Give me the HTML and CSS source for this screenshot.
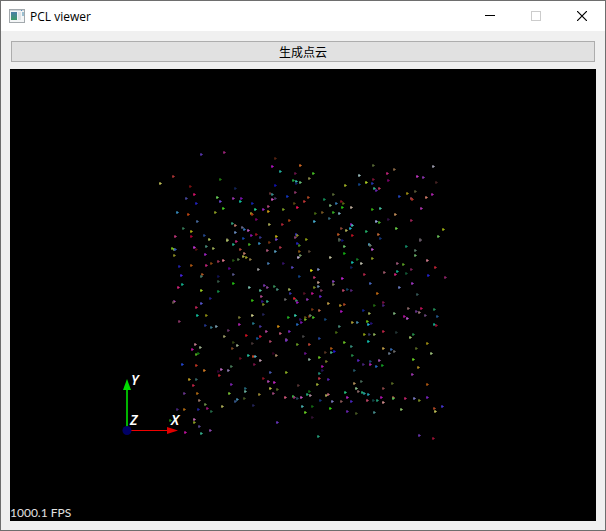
FILE: index.html
```html
<!DOCTYPE html>
<html lang="zh-CN">
<head>
  <meta charset="UTF-8">
  <meta name="viewport" content="width=device-width, initial-scale=1.0">
  <title>PCL viewer</title>
  <link rel="stylesheet" href="styles.css">
</head>
<body>
  <div class="window">
    <!-- Title bar -->
    <header class="titlebar">
      <svg class="appIcon" width="16" height="14" viewBox="0 0 16 14">
        <defs>
          <linearGradient id="paneFill" x1="0" y1="0" x2="0" y2="1">
            <stop offset="0" stop-color="#4b7fa8"/>
            <stop offset="1" stop-color="#3d9a68"/>
          </linearGradient>
        </defs>
        <rect x="0.5" y="0.5" width="15" height="13" fill="#f4f6f7" stroke="#a3a9ad"/>
        <rect x="1" y="1" width="14" height="1" fill="#cfd6da"/>
        <rect x="2" y="3" width="6" height="8" fill="url(#paneFill)"/>
        <rect x="9" y="3" width="3" height="8" fill="#dfe3e6"/>
        <rect x="13" y="3" width="2" height="4" fill="#9bbfd0"/>
        <rect x="12" y="1" width="1" height="1" fill="#5a8fc0"/>
      </svg>
      <h1 class="title">PCL viewer</h1>
      <button class="control" aria-label="Minimize">
        <svg width="10" height="10" viewBox="0 0 10 10"><path d="M0 4.5h10" stroke="#000"/></svg>
      </button>
      <button class="control" aria-label="Maximize" disabled>
        <svg width="10" height="10" viewBox="0 0 10 10"><rect x="0.5" y="0.5" width="9" height="9" fill="none" stroke="#ccc"/></svg>
      </button>
      <button class="control" aria-label="Close">
        <svg width="10" height="10" viewBox="0 0 10 10"><path d="M0 0L10 10M10 0L0 10" stroke="#000" stroke-width="1.2"/></svg>
      </button>
    </header>

    <main class="content">
      <button class="generate">生成点云</button>

      <!-- Point cloud view -->
      <div class="view">
        <svg class="scene" viewBox="0 0 586 452">
          <g id="cloud"></g>
          <g class="axes">
            <path d="M117 361V320" stroke="#00b400" stroke-width="2"/>
            <path d="M117 310L121 321H113Z" fill="#00dc00"/>
            <path d="M117 361.5H158" stroke="#f00000"/>
            <path d="M168 361.5L157 358V365Z" fill="#e00000"/>
            <circle cx="117" cy="361.5" r="4.5" fill="#000066"/>
            <text x="121" y="316">Y</text>
            <text x="120" y="356">Z</text>
            <text x="161" y="356">X</text>
          </g>
        </svg>
        <span class="fps">1000.1 FPS</span>
      </div>
    </main>
  </div>

  <script src="cloud.js"></script>
</body>
</html>
```

FILE: styles.css
```css
body {
  margin: 0;
  font-family: "Open Sans", "Noto Sans CJK SC", sans-serif;
  font-size: 12px;
  color: #000;
}

.window {
  box-sizing: border-box;
  height: 100vh;
  display: flex;
  flex-direction: column;
  background-color: #f0f0f0;
  border: 1px solid #6e6e6e;
}

/* Title bar */
.titlebar {
  display: flex;
  align-items: center;
  height: 30px;
  padding-left: 8px;
  background-color: #fff;
}

.appIcon {
  margin-right: 5px;
}

.title {
  flex: 1;
  margin: 0;
  font-size: 12px;
  font-weight: normal;
}

.control {
  display: flex;
  align-items: center;
  justify-content: center;
  width: 46px;
  height: 30px;
  padding: 0;
  border: none;
  background-color: transparent;
}

.control:hover:enabled {
  background-color: #e5e5e5;
}

/* Content */
.content {
  flex: 1;
  min-height: 0;
  display: flex;
  flex-direction: column;
  gap: 7px;
  padding: 10px 9px 9px;
}

.generate {
  height: 21px;
  margin: 0 1px;
  padding: 0;
  border: 1px solid #adadad;
  background-color: #e1e1e1;
  color: #000;
  font-family: "Noto Sans CJK SC", sans-serif;
  font-size: 12px;
  line-height: 19px;
}

.generate:hover {
  background-color: #e5f1fb;
  border-color: #0078d7;
}

.view {
  position: relative;
  flex: 1;
  min-height: 0;
  background-color: #000;
}

.scene {
  display: block;
  width: 100%;
  height: 100%;
}

.axes text {
  fill: #fff;
  font-family: "Noto Sans", sans-serif;
  font-size: 14px;
  font-style: italic;
  font-weight: 600;
}

.fps {
  position: absolute;
  left: 0;
  bottom: 0;
  color: #e0e0e0;
  font-family: Lato, sans-serif;
  font-size: 12px;
  line-height: 16px;
}
```

FILE: cloud.js
```javascript
// Each block holds its origin in the scene and its points as "x,y,colour",
// with x and y in thirds of a scene unit
const blocks = [
  { x: 140, y: 71, points: `155,43,53a 223,36,927 376,54,521 367,78,a1b 391,95,2a9 70,109,a33 30,130,bb5
    211,117,271 122,138,711 133,163,c16 437,101,614 429,120,2a4 439,123,3ba 440,131,126 377,135,11a
    255,145,125 361,159,633 367,162,388 435,157,836 202,172,6c5 211,184,64c 250,174,93a 273,174,71a
    271,184,1b9 108,174,449 138,190,22b 366,179,c5b 376,174,436 411,169,13b 433,189,541 441,201,e15
    307,189,12a 355,200,a47 220,205,4c2 317,209,2c8 340,209,92b 355,214,c91 401,207,792 82,217,38b
    195,216,892 114,223,b41 303,220,aa2 306,223,a31 318,239,706 142,245,469 419,241,a41 247,251,397
    257,257,b76 358,253,aa5 396,253,a23 99,265,375 278,261,668 283,268,37b 296,271,b5b 123,274,aa1
    255,278,68b 76,290,b37 124,290,a03 163,286,248 304,287,81a 318,284,912 330,293,338 380,290,ba1
    379,297,74c 280,296,14a 438,283,33c 443,285,882 437,291,847 178,298,ab5 231,299,664` },
  { x: 290, y: 71, points: `2,76,c62 40,100,4b2 28,116,884 2,127,6b7 221,77,563 283,88,864 400,78,99a
    179,106,9bb 262,99,b27 352,109,b3b 370,112,83a 177,132,148 199,127,ac2 216,131,23a 220,117,713
    264,122,706 408,128,422 137,136,9a2 222,144,3a8 237,146,b35 229,152,62a 100,164,563 322,160,981
    347,153,553 396,164,a2a 25,173,a42 74,179,185 299,169,24b 379,172,c76 335,174,a45 337,179,a32
    14,184,b33 124,183,812 130,189,561 108,189,37a 92,197,7a7 126,202,2b1 154,202,ba9 364,205,a3a
    242,205,4b9 216,208,3a1 46,219,461 66,216,752 99,217,3a2 117,219,7ab 286,224,b85 88,236,367
    42,243,4ac 228,244,9ad 237,248,4a2 266,239,314 335,240,925 153,254,91b 158,255,3ba 151,264,2ac
    124,265,843 138,271,aa5 199,274,2a6 290,265,6c4 429,268,9a1 116,284,b52 158,286,b12 234,284,b63
    240,295,137 416,290,6b5 119,297,676 20,297,891 361,298,555` },
  { x: 140, y: 171, points: `67,24,7b1 72,28,8b5 77,28,35b 74,46,882 134,22,b3c 140,27,511 169,18,487
    190,24,9a5 167,42,92b 231,2,ab6 260,3,b27 250,14,2a8 299,14,4a2 328,9,38b 358,7,731 392,21,a34
    441,9,22b 448,15,482 271,27,a43 283,40,b76 280,49,aa4 289,53,992 301,59,874 351,31,a57 377,34,59b
    447,34,851 446,52,bac 220,62,d78 204,64,935 250,62,251 264,58,574 183,70,841 168,76,b27 124,76,a51
    87,78,22a 93,105,42d 354,70,47a 399,69,316 427,81,54b 237,85,508 325,89,999 447,110,148 156,103,a52
    155,110,476 205,109,115 249,104,558 204,123,354 250,129,2b1 96,132,1a8 85,143,c27 154,152,9c2
    205,154,184 297,142,7ba 343,136,73a 353,142,849 332,151,5b9 373,139,385 381,149,487 417,148,9a5
    421,160,33a 333,168,a48 180,174,228 153,189,55c 72,185,a4a 69,187,654 307,182,3b1 336,183,318
    339,193,782 351,185,3a8 406,178,666 432,174,d23 439,180,486 441,187,91b 139,201,b25 141,225,1b9
    170,227,881 88,244,836 267,232,773 307,227,cc8 340,224,225 414,232,2a2 436,227,3ca 268,252,a2a
    310,251,278 441,253,26b 166,257,238 184,263,378 198,258,79a 330,259,439 384,258,c81 235,272,636
    350,274,a49 390,280,b57 417,274,72b 288,285,c12 224,289,996 332,290,c13 323,294,159 410,298,748` },
  { x: 290, y: 171, points: `126,2,117 133,19,6b6 132,39,1a1 28,34,543 91,52,bb9 2,46,796 207,12,5ac
    211,15,676 218,28,b5c 217,56,892 318,19,186 345,31,576 346,45,6a6 382,61,c78 172,57,172 157,66,1ba
    183,69,bba 291,69,957 310,73,592 406,82,b23 153,81,125 35,91,dd1 55,89,78b 43,112,b36 54,126,b98
    127,114,b2c 193,102,a24 252,97,956 287,102,c27 292,93,1a8 319,100,153 334,87,725 384,106,22c
    435,111,826 44,143,782 55,140,68a 64,151,735 101,124,84b 100,133,775 212,130,46b 297,142,67b
    336,130,93b 129,152,b46 143,147,146 154,150,527 14,160,512 36,160,b18 62,170,62c 22,177,83a
    232,160,b61 352,162,355 85,190,b94 120,195,a82 133,194,a42 223,196,261 251,188,714 249,196,427
    38,209,731 59,211,b64 125,213,a1b 189,211,128 209,220,9a5 282,220,7a7 326,206,866 363,206,b15
    348,213,638 359,217,977 402,209,285 376,226,647 411,228,258 314,228,a19 321,236,b5c 28,230,831
    32,225,686 39,231,4b2 17,239,7b2 16,231,651 77,237,147 156,246,a93 171,246,48a 201,244,6b1
    205,253,2ac 213,250,217 5,247,71a 2,238,316 117,258,487 402,253,1a8 409,257,913 249,274,b24
    108,277,461 192,282,891 207,283,336 224,282,8a5 290,276,233 341,282,284 331,292,9b6 10,288,444
    57,294,249 118,1,454 361,1,656` },
  { x: 140, y: 271, points: `135,12,b78 127,27,b19 152,22,9a8 138,42,5a2 144,39,171 97,73,24c 139,77,b32
    164,91,c72 119,119,b92 140,117,366 130,135,b24 102,159,638 141,160,a61 148,181,976 166,192,684
    172,205,917 184,214,264 83,209,427 103,208,a61 146,209,229 60,240,281 133,237,b6a 133,247,892
    148,260,548 107,277,b19 154,280,3a8 180,270,84a 250,7,341 248,26,742 263,15,9a8 307,9,433
    361,4,a46 409,2,73b 443,14,692 295,46,2b9 310,49,c42 315,49,5ab 379,47,a86 271,55,612 332,62,b9a
    313,73,714 214,87,b6b 236,90,87a 244,80,475 204,94,303 208,105,b23 360,98,45a 409,96,8a2
    340,114,812 356,125,a4a 372,126,b2b 245,133,72a 362,145,bb4 383,149,562 445,135,533 287,145,267
    287,155,6a9 237,159,7b3 327,162,983 371,161,947 405,171,c57 430,170,3c4 433,173,937 441,174,245
    262,178,48a 256,183,358 283,175,452 217,198,aa5 310,197,225 382,246,63b 370,41,302` },
  { x: 290, y: 271, points: `29,14,b43 132,6,6b2 205,5,1ba 154,19,387 156,46,284 95,24,a51 76,37,532 94,38,4a8
    103,35,21c 16,41,618 27,57,8a9 58,51,6b2 78,63,772 66,78,a1a 67,90,215 58,99,287 59,115,b34
    86,118,52a 53,132,9a3 251,26,b94 273,29,36a 282,33,666 267,41,678 349,26,562 382,11,981 393,41,9b7
    174,61,52b 190,72,427 212,64,247 211,72,a2a 229,78,26b 237,62,95a 246,75,192 340,58,6c2 354,82,a82
    162,91,256 336,102,93a 162,130,a85 184,125,465 278,129,562 381,133,a51 168,145,8b8 174,155,866
    250,146,844 136,157,2b7 187,156,2a7 193,160,299 206,164,29a 28,154,161 22,162,2a7 31,166,a89
    78,166,aa5 84,162,b67 4,172,b5b 143,172,a2b 37,198,161 60,182,137 96,184,77b 124,185,855
    154,185,42b 201,182,b46 220,182,144 233,181,297 244,173,a1a 249,187,c88 281,172,b54 281,176,5b5
    315,174,b26 344,175,77b 358,180,782 381,172,72b 6,200,4aa 15,217,6c2 90,204,3c1 142,213,62a
    168,219,452 223,217,488 304,208,8b6 403,204,a42 406,213,bb5 426,198,43c 38,232,313 54,289,297
    357,287,63a 400,295,913` }
];

const cloud = document.getElementById('cloud');

function addShape(d, color, opacity) {
  const shape = document.createElementNS('http://www.w3.org/2000/svg', 'path');
  shape.setAttribute('d', d);
  shape.setAttribute('fill', '#' + color);
  shape.setAttribute('fill-opacity', opacity);
  cloud.appendChild(shape);
}

// Draw one point as a small soft block with a bright centre
function drawPoint(x, y, color) {
  addShape(`M${x - 1} ${y}h3v1h-3z`, color, 0.7);
  addShape(`M${x - 1} ${y - 1}h2v3h-2z`, color, 0.6);
  addShape(`M${x} ${y}h1v1h-1z`, color, 1);
}

blocks.forEach(block => {
  block.points.split(/\s+/).forEach(point => {
    const [x, y, color] = point.split(',');
    drawPoint(block.x + Math.floor(x / 3), block.y + Math.floor(y / 3), color);
  });
});
```
